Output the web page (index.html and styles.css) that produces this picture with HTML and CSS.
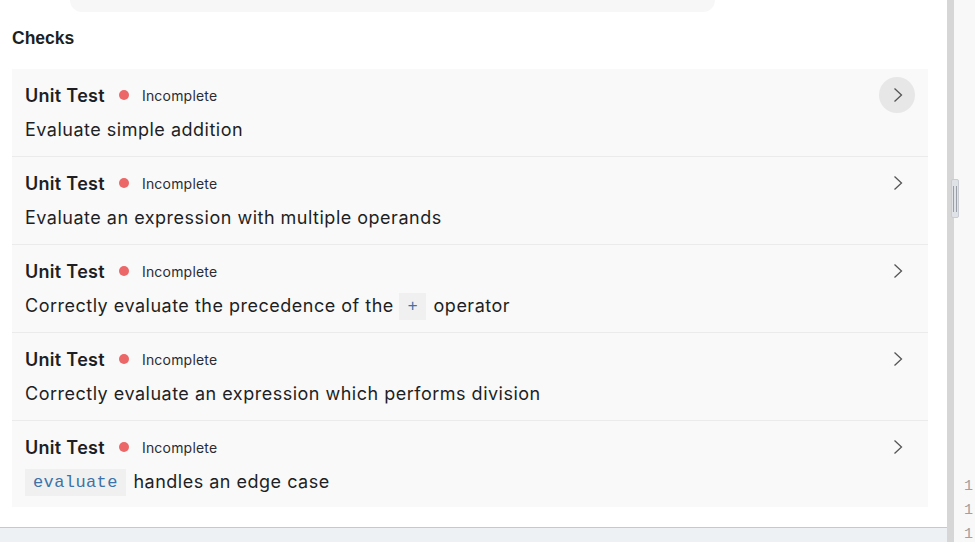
FILE: index.html
```html
<!DOCTYPE html>
<html>
<head>
<meta charset="utf-8">
<link rel="stylesheet" href="styles.css">
</head>
<body>
<div class="layout">
  <main class="main">
    <div class="content">
      <div class="top-box"></div>
      <h2 class="checks-title">Checks</h2>
      <ul class="checks">
        <li class="check">
          <div class="check-head">
            <span class="check-type">Unit Test</span>
            <span class="dot"></span>
            <span class="status">Incomplete</span>
            <button class="chev hover"><svg width="10" height="16" viewBox="0 0 10 16"><polyline points="1.5,1.5 8.5,8 1.5,14.5" fill="none" stroke="#555" stroke-width="1.3"/></svg></button>
          </div>
          <p class="desc">Evaluate simple addition</p>
        </li>
        <li class="check">
          <div class="check-head">
            <span class="check-type">Unit Test</span>
            <span class="dot"></span>
            <span class="status">Incomplete</span>
            <button class="chev"><svg width="10" height="16" viewBox="0 0 10 16"><polyline points="1.5,1.5 8.5,8 1.5,14.5" fill="none" stroke="#555" stroke-width="1.3"/></svg></button>
          </div>
          <p class="desc">Evaluate an expression with multiple operands</p>
        </li>
        <li class="check">
          <div class="check-head">
            <span class="check-type">Unit Test</span>
            <span class="dot"></span>
            <span class="status">Incomplete</span>
            <button class="chev"><svg width="10" height="16" viewBox="0 0 10 16"><polyline points="1.5,1.5 8.5,8 1.5,14.5" fill="none" stroke="#555" stroke-width="1.3"/></svg></button>
          </div>
          <p class="desc">Correctly evaluate the precedence of the <code class="code">+</code> operator</p>
        </li>
        <li class="check">
          <div class="check-head">
            <span class="check-type">Unit Test</span>
            <span class="dot"></span>
            <span class="status">Incomplete</span>
            <button class="chev"><svg width="10" height="16" viewBox="0 0 10 16"><polyline points="1.5,1.5 8.5,8 1.5,14.5" fill="none" stroke="#555" stroke-width="1.3"/></svg></button>
          </div>
          <p class="desc">Correctly evaluate an expression which performs division</p>
        </li>
        <li class="check">
          <div class="check-head">
            <span class="check-type">Unit Test</span>
            <span class="dot"></span>
            <span class="status">Incomplete</span>
            <button class="chev"><svg width="10" height="16" viewBox="0 0 10 16"><polyline points="1.5,1.5 8.5,8 1.5,14.5" fill="none" stroke="#555" stroke-width="1.3"/></svg></button>
          </div>
          <p class="desc"><code class="code">evaluate</code> handles an edge case</p>
        </li>
      </ul>
    </div>
    <div class="bottom-strip"></div>
  </main>
  <div class="splitter"><div class="handle"><span></span><span></span></div></div>
  <aside class="gutter">
    <div class="ln">1</div>
    <div class="ln">1</div>
    <div class="ln">1</div>
  </aside>
</div>
</body>
</html>
```
FILE: styles.css
```css
* { box-sizing: border-box; }
html, body { margin: 0; padding: 0; }
body {
  width: 975px;
  height: 542px;
  overflow: hidden;
  background: #fff;
  font-family: "Inter", "Liberation Sans", sans-serif;
  color: #1d1f24;
}
.layout {
  display: flex;
  height: 542px;
}
.main {
  width: 947px;
  flex: none;
  display: flex;
  flex-direction: column;
  background: #fff;
}
.content {
  flex: 1;
  overflow: hidden;
}
.top-box {
  margin-left: 70px;
  width: 645px;
  height: 12px;
  background: #f7f7f7;
  border-radius: 0 0 20px 20px;
}
.checks-title {
  margin: 16px 0 0 12px;
  font-family: "Liberation Sans", Arial, sans-serif;
  font-size: 17.5px;
  line-height: 20px;
  font-weight: bold;
  color: #1d1f24;
}
.checks {
  list-style: none;
  margin: 21px 0 0 12px;
  padding: 0;
  width: 916px;
  background: #f9f9f9;
}
.check {
  padding: 8px 13px 14px 13px;
  border-bottom: 1px solid #ebebeb;
}
.check:last-child { border-bottom: none; padding-bottom: 13px; }
.check-head {
  display: flex;
  align-items: center;
  height: 36px;
}
.check-type {
  font-size: 18px;
  font-weight: 600;
  letter-spacing: 0.3px;
  color: #1d1f24;
}
.dot {
  width: 10px;
  height: 10px;
  border-radius: 50%;
  background: #ec6767;
  margin-left: 14px;
}
.status {
  margin-left: 13px;
  font-size: 14px;
  letter-spacing: 0.2px;
  color: #2a2c33;
}
.chev {
  margin-left: auto;
  width: 36px;
  height: 36px;
  border: none;
  border-radius: 50%;
  background: transparent;
  display: flex;
  align-items: center;
  justify-content: center;
  padding: 0 0 0 2px;
}
.chev.hover { background: #e7e7e7; }
.desc {
  margin: 5px 0 0 0;
  font-size: 18px;
  line-height: 24px;
  letter-spacing: 0.5px;
  color: #1d1f24;
}
.code {
  font-family: "Liberation Mono", monospace;
  font-size: 17px;
  line-height: 1;
  letter-spacing: 0.4px;
  color: #3c73a8;
  background: #f0f0f0;
  padding: 4px 8px;
  margin-right: 2px;
  vertical-align: 1px;
}
.bottom-strip {
  height: 15px;
  flex: none;
  background: #eef1f4;
  border-top: 1px solid #c8c8c8;
}
.splitter {
  width: 7px;
  flex: none;
  background: #d6d6d6;
  position: relative;
}
.handle {
  position: absolute;
  left: 4px;
  top: 179px;
  width: 8px;
  height: 39px;
  background: #dfe2e7;
  border: 1px solid #c9ccd2;
  border-radius: 2px;
  display: flex;
  justify-content: center;
  align-items: center;
  gap: 2px;
  z-index: 2;
}
.handle span {
  width: 1px;
  height: 26px;
  background: #9a9ea6;
}
.gutter {
  flex: 1;
  background: #f8f8f8;
  padding: 480px 0 0 10px;
  overflow: hidden;
  white-space: nowrap;
  display: flex;
  flex-direction: column;
  gap: 10px;
}
.ln {
  font-family: "Liberation Mono", monospace;
  font-size: 15px;
  line-height: 14px;
  color: #a0a0a0;
}
```
